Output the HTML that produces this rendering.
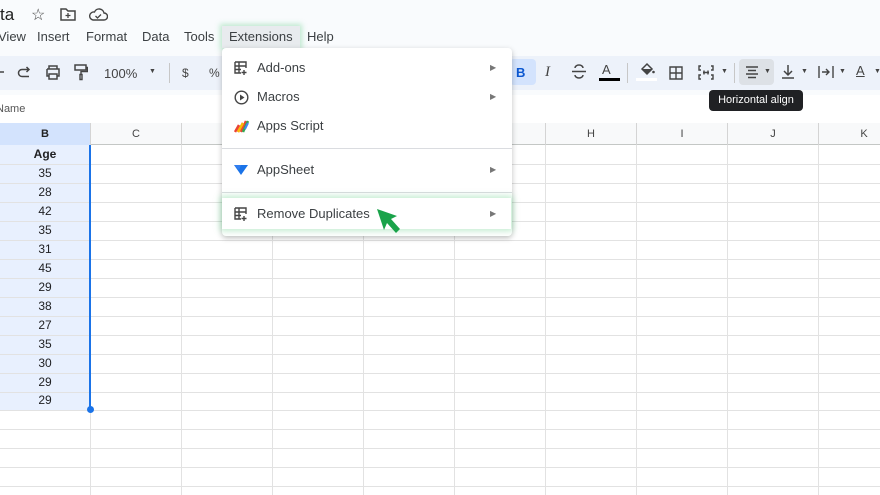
<!DOCTYPE html><html><head><style>
*{margin:0;padding:0;box-sizing:border-box}
body{width:880px;height:495px;overflow:hidden;background:#fff;font-family:"Liberation Sans",Arial,sans-serif;position:relative;color:#202124}
.abs{position:absolute}
.top{left:0;top:0;width:880px;height:95px;background:#f9fbfd}
.tb{left:0;top:56px;width:880px;height:34px;background:#edf2fa}
.menu{font-size:13px;color:#3c4043;top:29px}
.hdr{top:123px;height:22px;background:#f8f9fa;border-bottom:1px solid #c4c7c5;width:880px;left:0}
.col{position:absolute;top:123px;height:22px;font-size:11px;color:#444;text-align:center;line-height:22px;border-right:1px solid #d4d4d4}
.vl{position:absolute;top:145px;bottom:0;width:1px;background:#e2e2e2}
.hl{position:absolute;left:0;width:880px;height:1px;background:#e2e2e2}
.cell{position:absolute;left:0;width:90px;height:19px;text-align:center;font-size:12px;line-height:19px;color:#202124}
.dd{left:222px;top:48px;width:290px;height:188px;background:#fff;border-radius:4px;box-shadow:0 2px 6px rgba(0,0,0,.25)}
.it{position:absolute;left:35px;font-size:13px;color:#3c4043}
.ar{position:absolute;left:268px;font-size:8px;color:#777}
.sep{position:absolute;left:0;width:290px;height:1px;background:#dadce0}
</style></head><body>
<div class="abs top"></div>
<div class="abs tb"></div>
<div class="abs" style="left:0;top:5px;font-size:17px;color:#1f1f1f">ta</div>
<div class="abs" style="left:31px;top:5px;font-size:16px;color:#444">☆</div>
<svg class="abs" style="left:60px;top:8px" width="16" height="13"><path d="M1 1h5l2 2h7v9H1z" fill="none" stroke="#444" stroke-width="1.5"/><path d="M8 5v5M5.5 7.5h5" stroke="#444" stroke-width="1.3"/></svg>
<svg class="abs" style="left:88px;top:8px" width="20" height="13"><path d="M5 12h11a3.5 3.5 0 0 0 0-7 5 5 0 0 0-9.5-1A4 4 0 0 0 5 12z" fill="none" stroke="#444" stroke-width="1.4"/><path d="M7.5 8l2 2 3.5-3.5" fill="none" stroke="#444" stroke-width="1.3"/></svg>
<div class="abs menu" style="left:-2px">View</div>
<div class="abs menu" style="left:37px">Insert</div>
<div class="abs menu" style="left:86px">Format</div>
<div class="abs menu" style="left:142px">Data</div>
<div class="abs menu" style="left:184px">Tools</div>
<div class="abs" style="left:222px;top:26px;width:78px;height:22px;background:#e8ebee;box-shadow:0 0 5px 2px rgba(80,200,120,.35)"></div>
<div class="abs menu" style="left:229px">Extensions</div>
<div class="abs menu" style="left:307px">Help</div>
<svg class="abs" style="left:0;top:66px" width="6" height="12"><path d="M0 6h4" stroke="#444" stroke-width="1.5"/></svg>
<svg class="abs" style="left:17px;top:66px" width="14" height="12"><path d="M12 3.5H5a3.5 3.5 0 0 0 0 7h7M9.5 1l2.5 2.5-2.5 2.5" fill="none" stroke="#444" stroke-width="1.5"/></svg>
<svg class="abs" style="left:45px;top:65px" width="16" height="15"><path d="M4 4V1h8v3M2 4h12v7h-2M4 11H2V4M4 9h8v5H4z" fill="none" stroke="#444" stroke-width="1.5"/></svg>
<svg class="abs" style="left:74px;top:64px" width="14" height="17"><rect x="1" y="1" width="11" height="5" fill="none" stroke="#444" stroke-width="1.5"/><path d="M12 3.5h1.3v4H7v3M6 10.5h2v5H6z" fill="none" stroke="#444" stroke-width="1.4"/></svg>
<div class="abs" style="left:104px;top:66px;font-size:13px;color:#444">100%</div>
<div class="abs" style="left:149px;top:68px;font-size:7px;color:#444">▼</div>
<div class="abs" style="left:169px;top:63px;width:1px;height:20px;background:#c7c7c7"></div>
<div class="abs" style="left:182px;top:66px;font-size:12px;color:#444">$</div>
<div class="abs" style="left:209px;top:66px;font-size:12px;color:#444">%</div>
<div class="abs" style="left:510px;top:59px;width:26px;height:26px;background:#d3e3fd;border-radius:4px"></div>
<div class="abs" style="left:516px;top:65px;font-size:13px;font-weight:bold;color:#0b57d0">B</div>
<div class="abs" style="left:545px;top:64px;font-size:15px;font-style:italic;font-family:'Liberation Serif';color:#444">I</div>
<svg class="abs" style="left:571px;top:64px" width="16" height="15"><path d="M4 4a4 3 0 0 1 8 0M4 11a4 3 0 0 0 8 0M1 7.5h14" fill="none" stroke="#444" stroke-width="1.5"/></svg>
<div class="abs" style="left:602px;top:62px;font-size:13px;color:#444">A</div>
<div class="abs" style="left:599px;top:78px;width:21px;height:3px;background:#000"></div>
<div class="abs" style="left:627px;top:63px;width:1px;height:20px;background:#c7c7c7"></div>
<svg class="abs" style="left:639px;top:62px" width="16" height="14"><path d="M3 7l5-5 5 5-5 5z" fill="none" stroke="#444" stroke-width="1.5"/><path d="M3 7h10l-5 5z" fill="#444"/><circle cx="14.5" cy="10" r="1.3" fill="#444"/></svg>
<div class="abs" style="left:636px;top:78px;width:21px;height:3px;background:#fff"></div>
<svg class="abs" style="left:669px;top:66px" width="14" height="14"><path d="M1 1h12v12H1zM7 1v12M1 7h12" fill="none" stroke="#444" stroke-width="1.4"/></svg>
<svg class="abs" style="left:698px;top:65px" width="16" height="15"><path d="M3 1H1v4h2M3 10H1v4h2M13 1h2v4h-2M13 10h2v4h-2M5 7.5h6M6 5.5v4M10 5.5v4" fill="none" stroke="#444" stroke-width="1.4"/></svg>
<div class="abs" style="left:721px;top:68px;font-size:7px;color:#444">▼</div>
<div class="abs" style="left:734px;top:63px;width:1px;height:20px;background:#c7c7c7"></div>
<div class="abs" style="left:739px;top:59px;width:35px;height:26px;background:#dde1e6;border-radius:4px"></div>
<svg class="abs" style="left:745px;top:66px" width="14" height="13"><path d="M1 1h12M3 4.5h8M1 8h12M3 11.5h8" stroke="#444" stroke-width="1.5"/></svg>
<div class="abs" style="left:764px;top:68px;font-size:7px;color:#444">▼</div>
<svg class="abs" style="left:781px;top:64px" width="14" height="16"><path d="M7 1v10M3 7l4 4 4-4M1 14h12" fill="none" stroke="#444" stroke-width="1.5"/></svg>
<div class="abs" style="left:801px;top:68px;font-size:7px;color:#444">▼</div>
<svg class="abs" style="left:818px;top:65px" width="16" height="14"><path d="M1 1v12M15 1v12M4 7h7M8 4l3 3-3 3" fill="none" stroke="#444" stroke-width="1.4"/></svg>
<div class="abs" style="left:839px;top:68px;font-size:7px;color:#444">▼</div>
<div class="abs" style="left:856px;top:63px;font-size:13px;color:#444;text-decoration:underline">A</div>
<div class="abs" style="left:874px;top:68px;font-size:7px;color:#444">▼</div>
<div class="abs" style="left:709px;top:90px;width:94px;height:21px;background:#202124;border-radius:4px;color:#fff;font-size:11px;line-height:21px;text-align:center">Horizontal align</div>
<div class="abs" style="left:-4px;top:103px;font-size:11px;color:#555">Name</div>
<div class="abs hdr"></div>
<div class="abs" style="left:0;top:123px;width:90px;height:22px;background:#d3e3fd"></div>
<div class="col" style="left:0;width:91px;font-weight:bold;color:#222">B</div>
<div class="col" style="left:91px;width:91px">C</div>
<div class="col" style="left:182px;width:91px"></div>
<div class="col" style="left:273px;width:91px"></div>
<div class="col" style="left:364px;width:91px"></div>
<div class="col" style="left:455px;width:91px"></div>
<div class="col" style="left:546px;width:91px">H</div>
<div class="col" style="left:637px;width:91px">I</div>
<div class="col" style="left:728px;width:91px">J</div>
<div class="col" style="left:819px;width:91px">K</div>
<div class="abs" style="left:0;top:145px;width:90px;height:265px;background:#e8f0fe"></div>
<div class="vl" style="left:181px"></div><div class="vl" style="left:272px"></div><div class="vl" style="left:363px"></div><div class="vl" style="left:454px"></div><div class="vl" style="left:545px"></div><div class="vl" style="left:636px"></div><div class="vl" style="left:727px"></div><div class="vl" style="left:818px"></div>
<div class="vl" style="left:90px;top:410px"></div>
<div class="hl" style="top:164px"></div><div class="hl" style="top:183px"></div><div class="hl" style="top:202px"></div><div class="hl" style="top:221px"></div><div class="hl" style="top:240px"></div><div class="hl" style="top:259px"></div><div class="hl" style="top:278px"></div><div class="hl" style="top:297px"></div><div class="hl" style="top:316px"></div><div class="hl" style="top:335px"></div><div class="hl" style="top:354px"></div><div class="hl" style="top:373px"></div><div class="hl" style="top:392px"></div><div class="hl" style="top:410px"></div><div class="hl" style="top:429px"></div><div class="hl" style="top:448px"></div><div class="hl" style="top:467px"></div><div class="hl" style="top:486px"></div>
<div class="abs" style="left:89px;top:145px;width:2px;height:265px;background:#1a73e8"></div>
<div class="abs" style="left:87px;top:406px;width:7px;height:7px;border-radius:50%;background:#1a73e8"></div>
<div class="cell" style="top:145px;font-weight:bold">Age</div>
<div class="cell" style="top:164px">35</div><div class="cell" style="top:183px">28</div><div class="cell" style="top:202px">42</div><div class="cell" style="top:221px">35</div><div class="cell" style="top:240px">31</div><div class="cell" style="top:259px">45</div><div class="cell" style="top:278px">29</div><div class="cell" style="top:297px">38</div><div class="cell" style="top:316px">27</div><div class="cell" style="top:335px">35</div><div class="cell" style="top:354px">30</div><div class="cell" style="top:373px">29</div><div class="cell" style="top:391px">29</div>
<div class="abs dd">
<svg class="abs" style="left:12px;top:13px" width="15" height="14"><path d="M1 1h11v6M1 1v11h6M1 5h11M1 8.5h6M5 1v11M10 9v5M7.5 11.5h5" fill="none" stroke="#444" stroke-width="1.4"/></svg>
<div class="it" style="top:12px">Add-ons</div><div class="ar" style="top:15px">▶</div>
<svg class="abs" style="left:12px;top:42px" width="15" height="15"><circle cx="7.5" cy="7.5" r="6.3" fill="none" stroke="#444" stroke-width="1.4"/><path d="M6 4.5v6l4.5-3z" fill="#444"/></svg>
<div class="it" style="top:41px">Macros</div><div class="ar" style="top:44px">▶</div>
<svg class="abs" style="left:12px;top:71px" width="15" height="14"><path d="M1 13l4-7M4 13l5-9M7 13l5-11" stroke="#ea4335" stroke-width="2.5"/><path d="M4 13l5-9" stroke="#fbbc04" stroke-width="2.5"/><path d="M9 13l5-11" stroke="#34a853" stroke-width="2.5"/><path d="M11 10l3-6" stroke="#4285f4" stroke-width="2"/></svg>
<div class="it" style="top:70px">Apps Script</div>
<div class="sep" style="top:100px"></div>
<svg class="abs" style="left:12px;top:116px" width="14" height="12"><path d="M0 1h14L7 11z" fill="#1a73e8"/><path d="M0 1h7L5 6z" fill="#4285f4" opacity=".6"/></svg>
<div class="it" style="top:114px">AppSheet</div><div class="ar" style="top:117px">▶</div>
<div class="sep" style="top:144px"></div>
<div class="abs" style="left:0;top:150px;width:289px;height:31px;background:#fff;box-shadow:0 0 6px 2px rgba(80,200,120,.35)"></div>
<svg class="abs" style="left:12px;top:159px" width="15" height="14"><path d="M1 1h11v6M1 1v11h6M1 5h11M1 8.5h6M5 1v11M10 9v5M7.5 11.5h5" fill="none" stroke="#444" stroke-width="1.4"/></svg>
<div class="it" style="top:158px">Remove Duplicates</div><div class="ar" style="top:161px">▶</div>
<svg class="abs" style="left:154px;top:160px" width="28" height="28"><path d="M1 1l20 7-6 3 9 10-4 4-9-10-3 7z" fill="#1aa34a"/></svg>
</div>
</body></html>
